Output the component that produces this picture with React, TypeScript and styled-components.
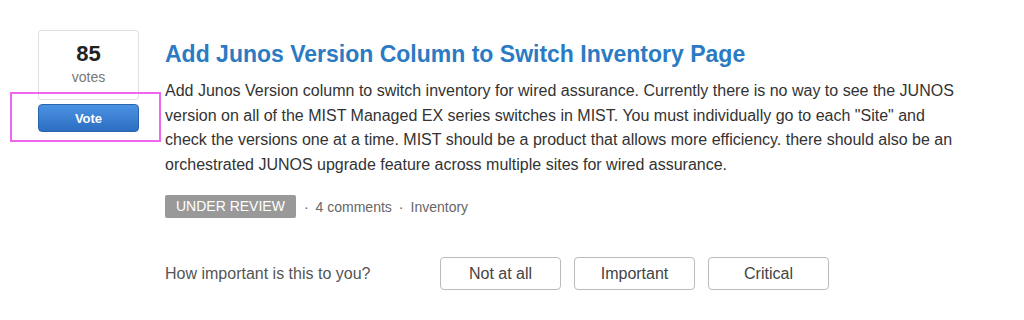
import React from 'react'
import styled, { createGlobalStyle } from 'styled-components'

const GlobalStyle = createGlobalStyle`
  html, body {
    margin: 0;
    padding: 0;
    background: #fff;
  }
  body {
    font-family: 'Liberation Sans', Arial, Helvetica, sans-serif;
    color: #333;
  }
`

const Page = styled.div`
  width: 1024px;
  height: 320px;
  box-sizing: border-box;
  padding: 30px 0 0 38px;
  display: flex;
  gap: 26px;
  position: relative;
`

const VoteColumn = styled.div`
  width: 101px;
  display: flex;
  flex-direction: column;
  gap: 4px;
  position: relative;
`

const VoteCount = styled.div`
  height: 70px;
  box-sizing: border-box;
  border: 1px solid #dcdfe3;
  border-radius: 3px;
  display: flex;
  flex-direction: column;
  align-items: center;
  padding-top: 12px;
`

const Count = styled.div`
  font-size: 22px;
  font-weight: bold;
  color: #222;
  line-height: 22px;
`

const Label = styled.div`
  font-size: 14px;
  color: #777;
  margin-top: 4px;
`

const VoteButton = styled.button`
  height: 28px;
  border: 1px solid #2a64ad;
  border-radius: 4px;
  background: linear-gradient(#4b92e2, #2c6ec2);
  color: #fff;
  font-family: inherit;
  font-size: 13px;
  font-weight: bold;
  padding: 0;
`

const Highlight = styled.div`
  position: absolute;
  left: -28px;
  top: 62px;
  width: 151px;
  height: 50px;
  box-sizing: border-box;
  border: 2px solid #ee66ee;
  pointer-events: none;
`

const Content = styled.div`
  flex: 1;
`

const Title = styled.h1`
  margin: 10px 0 0;
  font-size: 23px;
  line-height: 28px;
  font-weight: bold;
  color: #2b7bc3;
`

const Body = styled.p`
  margin: 11px 0 0;
  font-size: 16px;
  line-height: 24.6px;
  color: #333;
  white-space: nowrap;
`

const Meta = styled.div`
  display: flex;
  align-items: center;
  margin-top: 18px;
  font-size: 14px;
  color: #666;
`

const Badge = styled.span`
  background: #999;
  color: #fff;
  font-size: 14px;
  line-height: 23px;
  padding: 0 11px;
  border-radius: 2px;
  text-transform: uppercase;
  margin-right: 1px;
`

const Dot = styled.span`
  margin: 0 7px;
`

const Importance = styled.div`
  display: flex;
  align-items: center;
  margin-top: 39px;
`

const Question = styled.span`
  font-size: 16px;
  color: #555;
  width: 275px;
`

const Options = styled.div`
  display: flex;
  gap: 13px;
`

const Option = styled.button`
  width: 121px;
  height: 33px;
  box-sizing: border-box;
  border: 1px solid #bbb;
  border-radius: 4px;
  background: #fff;
  color: #444;
  font-family: inherit;
  font-size: 16px;
  padding: 0;
`

export default function App() {
  return (
    <>
      <GlobalStyle />
      <Page>
        <VoteColumn>
          <VoteCount>
            <Count>85</Count>
            <Label>votes</Label>
          </VoteCount>
          <VoteButton>Vote</VoteButton>
          <Highlight />
        </VoteColumn>
        <Content>
          <Title>Add Junos Version Column to Switch Inventory Page</Title>
          <Body>
            Add Junos Version column to switch inventory for wired assurance. Currently there is no way to see the JUNOS
            <br />
            version on all of the MIST Managed EX series switches in MIST. You must individually go to each "Site" and
            <br />
            check the versions one at a time. MIST should be a product that allows more efficiency. there should also be an
            <br />
            orchestrated JUNOS upgrade feature across multiple sites for wired assurance.
          </Body>
          <Meta>
            <Badge>Under Review</Badge>
            <Dot>·</Dot>4 comments<Dot>·</Dot>Inventory
          </Meta>
          <Importance>
            <Question>How important is this to you?</Question>
            <Options>
              <Option>Not at all</Option>
              <Option>Important</Option>
              <Option>Critical</Option>
            </Options>
          </Importance>
        </Content>
      </Page>
    </>
  )
}
